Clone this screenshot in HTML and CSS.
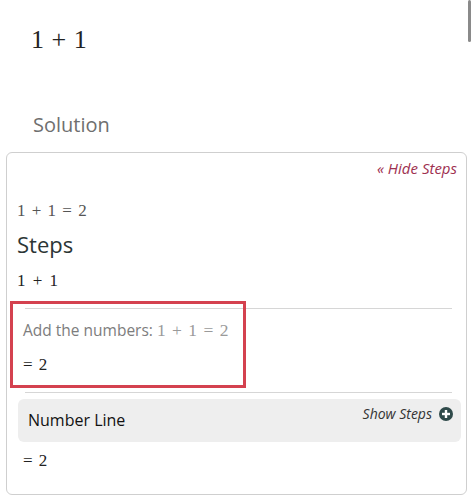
FILE: index.html
```html
<!DOCTYPE html>
<html>
<head>
<meta charset="utf-8">
<link rel="stylesheet" href="styles.css">
</head>
<body>
<div class="scrollbar"></div>
<div class="page">
  <div class="problem math">1 + 1</div>
  <div class="solution-label">Solution</div>
  <div class="card">
    <div class="hide-row"><span class="hide-link">« Hide Steps</span></div>
    <div class="answer math">1 + 1 = 2</div>
    <div class="steps-title">Steps</div>
    <div class="step-expr math">1 + 1</div>
    <div class="step">
      <div class="sep"></div>
      <div class="step-desc">Add the numbers: <span class="math">1 + 1 = 2</span></div>
      <div class="step-result math">= 2</div>
      <div class="sep"></div>
      <div class="highlight"></div>
    </div>
    <div class="numline">
      <span class="numline-title">Number Line</span>
      <span class="show-steps">Show Steps
        <svg width="14" height="14" viewBox="0 0 14 14"><circle cx="7" cy="7" r="7" fill="#2f4a4a"/><rect x="3" y="5.8" width="8" height="2.4" fill="#fff"/><rect x="5.8" y="3" width="2.4" height="8" fill="#fff"/></svg>
      </span>
    </div>
    <div class="final math">= 2</div>
  </div>
</div>
</body>
</html>
```
FILE: styles.css
```css
* { box-sizing: border-box; }
html, body { margin: 0; padding: 0; background: #fff; }
body { width: 474px; height: 499px; overflow: hidden; position: relative; font-family: "Open Sans", "DejaVu Sans", sans-serif; }
.scrollbar { position: absolute; right: 3px; top: 0; width: 3px; height: 42px; background: #8a8a8a; border-radius: 2px; }
.page { padding: 0 7px 0 6px; }
.math { font-family: "Liberation Serif", serif; word-spacing: 2px; }
.problem { font-size: 26px; color: #222; padding: 25px 0 0 25px; height: 112px; word-spacing: 1px; }
.solution-label { font-size: 20px; color: #6f6f6f; padding-left: 27px; height: 40px; line-height: 26px; }
.card { border: 1px solid #cfcfcf; border-radius: 6px; padding: 0 5px 14px 10px; height: 343px; }
.hide-row { display: flex; justify-content: flex-end; padding: 5px 4px 0 0; height: 44px; }
.hide-link { font-style: italic; color: #9e3050; font-size: 15px; }
.answer { font-size: 17px; color: #555; height: 34px; line-height: 28px; }
.steps-title { font-size: 22px; color: #2c3535; height: 34px; line-height: 26px; }
.step-expr { font-size: 17px; color: #222; height: 33px; line-height: 20px; padding-top: 6px; word-spacing: 3px; }
.step { position: relative; padding: 10px 0 0 0; }
.sep { height: 1px; background: #d6d6d6; margin: 0 9px 0 8px; }
.step-desc { font-size: 15.5px; color: #7d7d7d; padding: 10px 0 0 6px; height: 46px; }
.step-desc .math { font-size: 17.5px; color: #9a9a9a; }
.step-result { font-size: 17px; color: #222; padding-left: 6px; height: 37px; }
.highlight { position: absolute; left: -7px; top: 3px; width: 236px; height: 87px; border: 3px solid #d4414f; }
.numline { display: flex; justify-content: space-between; align-items: flex-start; background: #eeeeee; border-radius: 6px; margin: 6px 0 0 1px; height: 43px; padding: 5px 8px 0 10px; }
.numline-title { font-size: 16px; color: #111; padding-top: 5px; }
.show-steps { font-style: italic; font-size: 14px; color: #333; display: flex; align-items: center; gap: 7px; }
.final { font-size: 17px; color: #222; padding: 9px 0 0 6px; }
```
